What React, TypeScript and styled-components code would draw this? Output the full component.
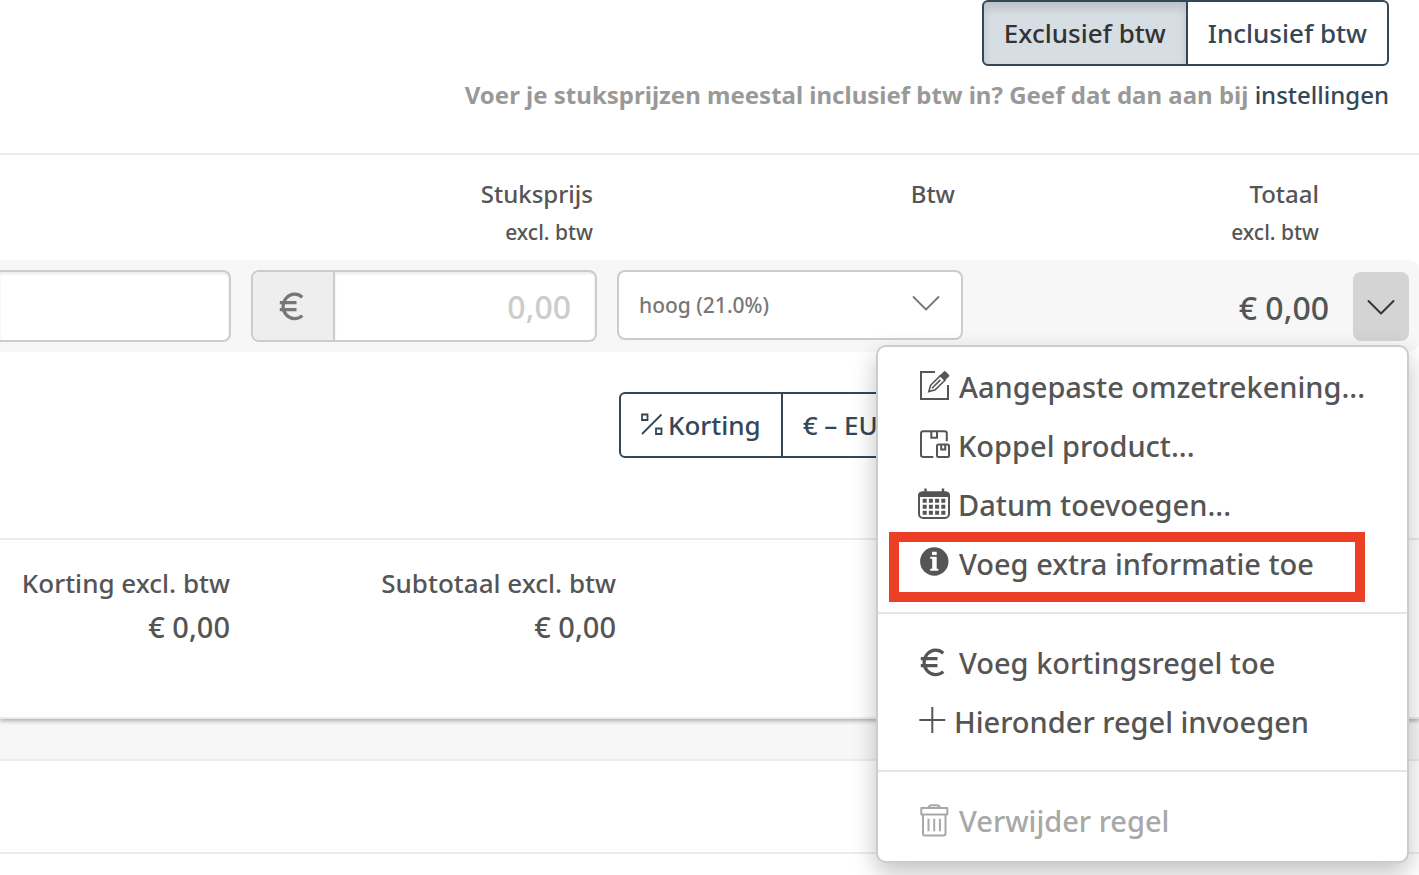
import React from "react";
import styled, { createGlobalStyle } from "styled-components";

const navy = "#344757";
const text = "#555555";
const line = "#ebebeb";
const control = "#cccccc";
const columns = "minmax(0, 231fr) minmax(0, 346fr) minmax(0, 346fr) minmax(0, 426fr)";

const GlobalStyle = createGlobalStyle`
  *, *::before, *::after { box-sizing: border-box; }
  body {
    margin: 0;
    background: #f7f7f7;
    color: ${text};
    font-family: "Noto Sans", "Open Sans", sans-serif;
    font-size: 24px;
    font-weight: 500;
  }
  button, input, select { font: inherit; color: inherit; margin: 0; }
`;

const Page = styled.main`
  display: flex;
  flex-direction: column;
  min-height: 100vh;
  overflow-x: clip;
`;

const InvoiceCard = styled.section`
  background: #ffffff;
  border-bottom: 2px solid ${line};
  box-shadow: 0 2px 4px rgba(0, 0, 0, 0.3);
`;

const PriceMode = styled.header`
  display: flex;
  flex-direction: column;
  align-items: flex-end;
  gap: 15px;
  padding: 0 30px 44px;
  border-bottom: 2px solid ${line};
`;

const ButtonGroup = styled.div`
  display: flex;
`;

const GroupButton = styled.button<{ $active?: boolean }>`
  display: flex;
  align-items: center;
  justify-content: center;
  gap: 5px;
  height: 66px;
  padding: 0 20px;
  border: 2px solid ${navy};
  background: ${(p) => (p.$active ? "#d6dde3" : "#ffffff")};
  color: ${(p) => (p.$active ? "#333333" : navy)};
  box-shadow: ${(p) => (p.$active ? "inset 0 6px 10px rgba(0, 0, 0, 0.13)" : "none")};
  font-size: 26px;
  white-space: nowrap;

  &:first-child { border-radius: 6px 0 0 6px; }
  &:last-child { border-radius: 0 6px 6px 0; }
  & + & { margin-left: -2px; }
`;

const Hint = styled.p`
  margin: 0;
  line-height: 28px;
  color: #999999;
  font-weight: 700;
  text-align: right;
`;

const HintLink = styled.a`
  color: ${navy};
  font-weight: 500;
  text-decoration: none;
`;

const LineTable = styled.table`
  display: block;
`;

const TableHead = styled.thead`
  display: block;
  padding: 20px 10px 9px 0;
`;

const TableBody = styled.tbody`
  display: block;
`;

const HeadRow = styled.tr`
  display: grid;
  grid-template-columns: ${columns};
  column-gap: 20px;
`;

const HeadCell = styled.th<{ $inset?: number }>`
  padding: 0 ${(p) => p.$inset ?? 0}px 0 0;
  font-weight: 500;
  line-height: 38px;
  text-align: right;
`;

const SubLabel = styled.small`
  display: block;
  font-size: 21px;
`;

const LineRow = styled.tr`
  display: grid;
  grid-template-columns: ${columns};
  column-gap: 20px;
  padding: 10px 10px 8px 0;
  background: #f7f7f7;
  border-radius: 0 10px 10px 0;
`;

const Cell = styled.td`
  display: flex;
  align-items: flex-start;
  padding: 0;
`;

const DescriptionInput = styled.input`
  width: 100%;
  height: 72px;
  padding: 0 20px;
  border: 2px solid ${control};
  border-left: 0;
  border-radius: 0 8px 8px 0;
  background: #ffffff;
  box-shadow: inset 0 2px 3px rgba(0, 0, 0, 0.08);
`;

const PriceField = styled.label`
  display: flex;
  width: 100%;
  height: 72px;
  overflow: hidden;
  border: 2px solid ${control};
  border-radius: 8px;
  background: #ffffff;
`;

const PricePrefix = styled.span`
  display: flex;
  flex: none;
  align-items: center;
  justify-content: center;
  width: 82px;
  border-right: 2px solid ${control};
  background: #eeeeee;
  color: #777777;
`;

const PriceInput = styled.input`
  flex: 1;
  min-width: 0;
  padding: 0 24px;
  border: 0;
  background: transparent;
  box-shadow: inset 0 2px 3px rgba(0, 0, 0, 0.08);
  font-size: 32px;
  text-align: right;

  &::placeholder { color: #cccccc; opacity: 1; }
`;

const SelectBox = styled.div`
  position: relative;
  width: 100%;
  color: #777777;
`;

const VatSelect = styled.select`
  display: block;
  width: 100%;
  height: 70px;
  padding: 0 60px 0 20px;
  appearance: none;
  border: 2px solid ${control};
  border-radius: 8px;
  background: #ffffff;
  font-size: 21px;
`;

const SelectChevron = styled.span`
  position: absolute;
  top: 0;
  right: 22px;
  bottom: 4px;
  display: flex;
  align-items: center;
  pointer-events: none;
`;

const TotalCell = styled(Cell)`
  position: relative;
  justify-content: flex-end;
  gap: 24px;
  padding-top: 2px;
`;

const RowTotal = styled.span`
  font-size: 32px;
  line-height: 72px;
`;

const MenuButton = styled.button`
  display: flex;
  align-items: center;
  justify-content: center;
  width: 56px;
  height: 69px;
  padding: 0;
  border: 0;
  border-radius: 8px;
  background: #d4d4d4;
  color: #333333;
`;

const Menu = styled.div`
  position: absolute;
  top: 75px;
  right: 0;
  z-index: 2;
  width: 533px;
  padding: 11px 0 10px;
  border: 2px solid ${control};
  border-radius: 10px;
  background: #ffffff;
  box-shadow: 0 10px 24px rgba(0, 0, 0, 0.24);
`;

const MenuItem = styled.button`
  position: relative;
  display: flex;
  align-items: center;
  gap: 8px;
  width: 100%;
  height: 59px;
  padding: 0 39px 3px 40px;
  border: 0;
  background: transparent;
  font-size: 29px;
  text-align: left;
  white-space: nowrap;

  &:disabled { color: #a8a8a8; }
`;

const Highlight = styled.span`
  position: absolute;
  top: -3px;
  left: 11px;
  right: 42px;
  height: 70px;
  border: 10px solid #eb4026;
  pointer-events: none;
`;

const MenuDivider = styled.hr`
  height: 2px;
  margin: 18px 0 20px;
  border: 0;
  background: #e5e5e5;
`;

const Actions = styled.div`
  display: grid;
  grid-template-columns: ${columns};
  column-gap: 20px;
  padding: 40px 10px 80px 0;
  border-bottom: 2px solid ${line};
`;

const ActionGroup = styled(ButtonGroup)`
  grid-column: 3 / -1;
  padding-left: 2px;
`;

const Totals = styled.dl`
  display: grid;
  grid-template-columns: 230fr 386fr 803fr;
  margin: 0;
  padding: 21px 0 68px;
`;

const TotalItem = styled.div`
  line-height: 44px;
  text-align: right;
`;

const TotalLabel = styled.dt`
  font-size: 26px;
`;

const TotalAmount = styled.dd`
  margin: 0;
  font-size: 29px;
`;

const LowerCard = styled.section`
  display: flex;
  flex: 1;
  flex-direction: column;
  margin-top: 40px;
  border-top: 2px solid ${line};
  background: #ffffff;
`;

const LowerRow = styled.div`
  height: 93px;
  border-bottom: 2px solid ${line};
`;

const Svg = styled.svg`
  display: block;
  flex: none;
  fill: none;
  stroke: currentColor;
`;

const Chevron = ({ strokeWidth }: { strokeWidth: number }) => (
  <Svg width="30" height="18" viewBox="0 0 30 18" strokeWidth={strokeWidth} strokeLinecap="round" strokeLinejoin="round" aria-hidden="true">
    <path d="M2.500 3 15 15.500 27.500 3" />
  </Svg>
);

const EuroIcon = () => (
  <Svg width="33" height="33" viewBox="0 0 33 33" strokeWidth="3.200" aria-hidden="true">
    <path d="M25.300 7.200A11.600 12.200 0 1 0 25.300 25.600" />
    <path d="M2.800 12.700H19.500M2.800 19.600H19.500" />
  </Svg>
);

const PercentIcon = () => (
  <Svg width="22" height="24" viewBox="0 0 22 24" strokeWidth="1.800" aria-hidden="true">
    <path d="M1 1.500H6.500V7H1ZM15 15.500H20.500V21H15ZM1 21 20.500 1.500" />
  </Svg>
);

const EditIcon = () => (
  <Svg width="33" height="33" viewBox="0 0 33 33" strokeWidth="2" aria-hidden="true">
    <path d="M17 2H3V29H30V15" />
    <path d="M10.800 21.500 12.600 15.300 22.300 5.600 26.900 10.200 17.200 19.700ZM14 18.300 22.400 9.900" strokeWidth="1.600" />
    <path d="M22.300 5.300 26 1.600Q26.700 1 27.400 1.600L30.800 5Q31.400 5.700 30.800 6.400L27.100 10.100Z" fill="currentColor" strokeWidth="0.500" />
  </Svg>
);

const ProductIcon = () => (
  <Svg width="32" height="33" viewBox="0 0 32 33" strokeWidth="2" aria-hidden="true">
    <path d="M15.300 28H5.300Q3 28 3 25.700V4.500Q3 2.200 5.300 2.200H26.500Q28.800 2.200 28.800 4.500V12.200" />
    <path d="M13.300 2.200V8.800H19V2.200M20.500 15.600H29.500Q31 15.600 31 17.100V26.500Q31 28 29.500 28H20.500Q19 28 19 26.500V17.100Q19 15.600 20.500 15.600ZM23.200 15.600V20.500H27.200V15.600" />
  </Svg>
);

const CalendarIcon = () => (
  <Svg width="32" height="33" viewBox="0 0 32 33" strokeWidth="2" aria-hidden="true">
    <rect x="1" y="4.500" width="30" height="25.500" rx="4" />
    <path d="M1 8V7.500Q1 4.500 4.500 4.500H27.500Q31 4.500 31 7.500V8Z" fill="currentColor" />
    <path d="M7.500 0.500V5M25 0.500V5" strokeWidth="2.400" />
    <path d="M6.700 10.800V27M12.900 10.800V27M19.100 10.800V27M25.300 10.800V27" strokeWidth="4" strokeDasharray="4 2" />
  </Svg>
);

const InfoIcon = () => (
  <Svg width="33" height="33" viewBox="0 0 33 33" aria-hidden="true">
    <circle cx="16.300" cy="14.500" r="14.200" fill="currentColor" stroke="none" />
    <path d="M14 4.800H18.700V8H14ZM12.200 9.700H18.700V21.700H20.300V23.700H12.200V21.700H14.200V11.700H12.200Z" fill="#ffffff" stroke="none" />
  </Svg>
);

const PlusIcon = () => (
  <Svg width="28" height="33" viewBox="0 0 28 33" strokeWidth="2" aria-hidden="true">
    <path d="M14.300 2V28M1.300 15H27.300" />
  </Svg>
);

const TrashIcon = () => (
  <Svg width="33" height="33" viewBox="0 0 33 33" strokeWidth="2" strokeLinejoin="round" aria-hidden="true">
    <path d="M3.300 4H29.300V10.500H3.300ZM5 10.500V29.500Q5 31.500 7 31.500H25.500Q27.500 31.500 27.500 29.500V10.500M10.500 4Q11 1.300 13.500 1.300H19Q21.500 1.300 22 4" />
    <path d="M10.500 14.800V27.200M16.200 14.800V27.200M21.900 14.800V27.200" />
  </Svg>
);

export default function App() {
  return (
    <>
      <GlobalStyle />
      <Page>
        <InvoiceCard>
          <PriceMode>
            <ButtonGroup role="group" aria-label="Prijsweergave">
              <GroupButton type="button" $active aria-pressed="true">Exclusief btw</GroupButton>
              <GroupButton type="button" aria-pressed="false">Inclusief btw</GroupButton>
            </ButtonGroup>
            <Hint>
              Voer je stuksprijzen meestal inclusief btw in? Geef dat dan aan bij{" "}
              <HintLink href="#instellingen">instellingen</HintLink>
            </Hint>
          </PriceMode>

          <LineTable>
            <TableHead>
              <HeadRow>
                <HeadCell as="td" />
                <HeadCell scope="col" $inset={4}>
                  Stuksprijs
                  <SubLabel>excl. btw</SubLabel>
                </HeadCell>
                <HeadCell scope="col" $inset={8}>Btw</HeadCell>
                <HeadCell scope="col" $inset={90}>
                  Totaal
                  <SubLabel>excl. btw</SubLabel>
                </HeadCell>
              </HeadRow>
            </TableHead>
            <TableBody>
              <LineRow>
                <Cell>
                  <DescriptionInput type="text" aria-label="Omschrijving" />
                </Cell>
                <Cell>
                  <PriceField>
                    <PricePrefix><EuroIcon /></PricePrefix>
                    <PriceInput type="text" inputMode="decimal" placeholder="0,00" aria-label="Stuksprijs" />
                  </PriceField>
                </Cell>
                <Cell>
                  <SelectBox>
                    <VatSelect aria-label="Btw" defaultValue="hoog">
                      <option value="hoog">hoog (21.0%)</option>
                    </VatSelect>
                    <SelectChevron><Chevron strokeWidth={1.8} /></SelectChevron>
                  </SelectBox>
                </Cell>
                <TotalCell>
                  <RowTotal>€ 0,00</RowTotal>
                  <MenuButton type="button" aria-label="Regelopties" aria-haspopup="menu" aria-expanded="true">
                    <Chevron strokeWidth={2} />
                  </MenuButton>
                  <Menu role="menu">
                    <MenuItem type="button" role="menuitem"><EditIcon />Aangepaste omzetrekening...</MenuItem>
                    <MenuItem type="button" role="menuitem"><ProductIcon />Koppel product...</MenuItem>
                    <MenuItem type="button" role="menuitem"><CalendarIcon />Datum toevoegen...</MenuItem>
                    <MenuItem type="button" role="menuitem"><InfoIcon />Voeg extra informatie toe<Highlight /></MenuItem>
                    <MenuDivider />
                    <MenuItem type="button" role="menuitem"><EuroIcon />Voeg kortingsregel toe</MenuItem>
                    <MenuItem type="button" role="menuitem"><PlusIcon />Hieronder regel invoegen</MenuItem>
                    <MenuDivider />
                    <MenuItem type="button" role="menuitem" disabled><TrashIcon />Verwijder regel</MenuItem>
                  </Menu>
                </TotalCell>
              </LineRow>
            </TableBody>
          </LineTable>

          <Actions>
            <ActionGroup>
              <GroupButton type="button"><PercentIcon />Korting</GroupButton>
              <GroupButton type="button">€ – EUR</GroupButton>
            </ActionGroup>
          </Actions>

          <Totals>
            <TotalItem>
              <TotalLabel>Korting excl. btw</TotalLabel>
              <TotalAmount>€ 0,00</TotalAmount>
            </TotalItem>
            <TotalItem>
              <TotalLabel>Subtotaal excl. btw</TotalLabel>
              <TotalAmount>€ 0,00</TotalAmount>
            </TotalItem>
          </Totals>
        </InvoiceCard>

        <LowerCard>
          <LowerRow />
        </LowerCard>
      </Page>
    </>
  );
}
